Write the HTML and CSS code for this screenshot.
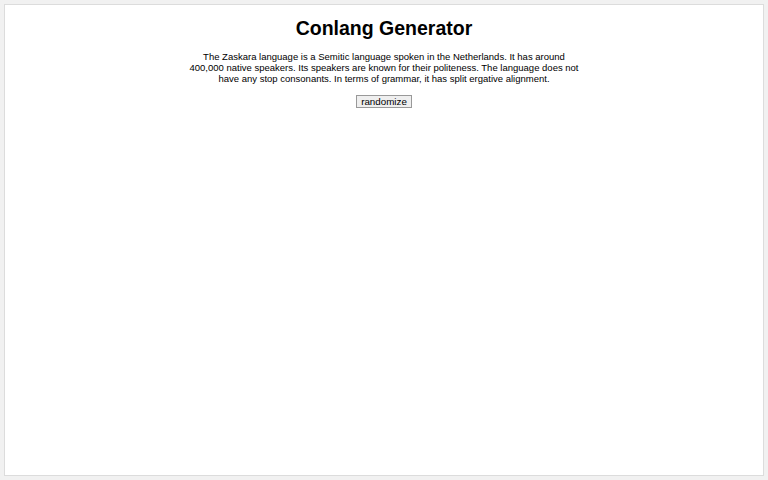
FILE: index.html
```html
<!DOCTYPE html>
<html lang="en">
<head>
  <meta charset="UTF-8" />
  <title>Conlang Generator</title>
  <link rel="stylesheet" href="styles.css">
</head>
<body>
  <div class="frame">
    <h1 class="title">Conlang Generator</h1>
    <p id="description" class="description">The Zaskara language is a Semitic language spoken in the Netherlands. It has around 400,000 native speakers. Its speakers are known for their politeness. The language does not have any stop consonants. In terms of grammar, it has split ergative alignment.</p>
    <button id="randomize" class="randomize">randomize</button>
  </div>
</body>
</html>
```

FILE: styles.css
```css
html, body {
  height: 100%;
}

body {
  margin: 0;
  padding: 4px;
  box-sizing: border-box;
  background: #f1f1f1;
  font-family: "Liberation Sans", Arial, sans-serif;
}

/* White card holding everything */
.frame {
  height: 100%;
  box-sizing: border-box;
  background: #fff;
  border: 1px solid #dcdcdc;
  text-align: center;
  padding-top: 11px;
}

.title {
  margin: 0;
  font-size: 19.5px;
  line-height: 24px;
}

.description {
  max-width: 396px;
  margin: 11px auto 7px;
  font-size: 9.5px;
  line-height: 11px;
}

.randomize {
  font-family: "Liberation Sans", Arial, sans-serif;
  font-size: 9.8px;
  line-height: 11px;
  padding: 0 4px;
  background: #efefef;
  border: 1px solid #999;
  border-radius: 0;
}
```
